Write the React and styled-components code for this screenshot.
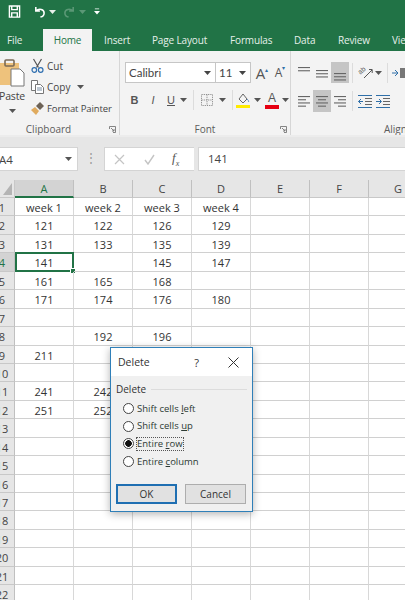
import styled, { createGlobalStyle } from "styled-components";

const GlobalStyle = createGlobalStyle`
  html, body { margin: 0; padding: 0; background: #fff; }
`;

const columns = ["A", "B", "C", "D", "E", "F", "G"];
const rows = [
  ["week 1", "week 2", "week 3", "week 4"],
  ["121", "122", "126", "129"],
  ["131", "133", "135", "139"],
  ["141", "", "145", "147"],
  ["161", "165", "168", ""],
  ["171", "174", "176", "180"],
  [],
  ["", "192", "196", ""],
  ["211"],
  [],
  ["241", "242"],
  ["251", "252"],
  [], [], [], [], [], [], [], [], [], [],
];
const tabs = [
  { name: "File", width: 36 },
  { name: "Home", width: 49, active: true },
  { name: "Insert", width: 48, gap: 12 },
  { name: "Page Layout", width: 78 },
  { name: "Formulas", width: 64 },
  { name: "Data", width: 44 },
  { name: "Review", width: 54 },
  { name: "View", width: 30 },
];
const radios = [
  { before: "Shift cells ", key: "l", after: "eft" },
  { before: "Shift cells ", key: "u", after: "p" },
  { before: "Entire ", key: "r", after: "ow", checked: true },
  { before: "Entire ", key: "c", after: "olumn" },
];

const Caret = ({ color = "#555" }) => (
  <svg width="7" height="4" viewBox="0 0 7 4"><path d="M0 0h7L3.5 4z" fill={color} /></svg>
);

const Lines = ({ widths, top = 1.5, color = "#666" }) => (
  <svg width="14" height="16" viewBox="0 0 14 16">
    {widths.map(([x, w], i) => (
      <rect key={i} x={x} y={top + i * 3.2} width={w} height="1.1" fill={color} />
    ))}
  </svg>
);

const Launcher = () => (
  <svg width="7" height="7" viewBox="0 0 7 7" fill="none" stroke="#777" strokeWidth="0.9">
    <path d="M.5 3V.5H6.5V6.5H4" />
    <path d="M2 2l3 3M5 3v2H3" />
  </svg>
);

const App = () => (
  <Page>
    <GlobalStyle />
    <Quick>
      <svg width="13" height="13" viewBox="0 0 13 14" fill="none" stroke="#fff" strokeWidth="1.5">
        <path d="M1 1h11v12H1zM3.5 1v4h6V1M3.5 13V8.5h6V13" />
      </svg>
      <svg width="13" height="12" viewBox="0 0 14 13" fill="none" stroke="#fff" strokeWidth="1.7">
        <path d="M3 1v4.5h4.5M3.3 5.2C6.5 2.2 12 3.6 12 7.5c0 2.4-1.8 4-4 4.5" />
      </svg>
      <Caret color="#e8f0ea" />
      <svg width="13" height="12" viewBox="0 0 14 13" fill="none" stroke="#5b9876" strokeWidth="1.7">
        <path d="M11 1v4.5H6.5M10.7 5.2C7.5 2.2 2 3.6 2 7.5c0 2.4 1.8 4 4 4.5" />
      </svg>
      <Caret color="#5b9876" />
      <svg width="6" height="7" viewBox="0 0 7 7"><path d="M1 0h5v1H1zM0 3h7L3.5 7z" fill="#fff" /></svg>
    </Quick>

    <TabBar>
      {tabs.map((tab) => (
        <Tab key={tab.name} $active={tab.active} $width={tab.width} $gap={tab.gap}>{tab.name}</Tab>
      ))}
    </TabBar>

    <Ribbon>
      <Group $width={142} $offset={-22}>
        <GroupBody $pad="8px 0 0 22px">
          <PasteColumn>
            <svg width="27" height="28" viewBox="0 0 27 28">
              <rect x="0" y="4" width="20" height="22" fill="#eec27c" />
              <rect x="6" y="1" width="9" height="6" rx="1" fill="none" stroke="#7a6a55" strokeWidth="1.6" />
              <path d="M12 10h9l4 4v13H12z" fill="#fff" stroke="#777" />
            </svg>
            <PasteLabel>Paste</PasteLabel>
            <Caret />
          </PasteColumn>
          <ClipList>
            <ClipItem>
              <svg width="13" height="15" viewBox="0 0 13 15" fill="none">
                <path d="M2.5 1l5 8.5M10.5 1l-5 8.5" stroke="#555" strokeWidth="1.2" />
                <circle cx="3.3" cy="12" r="2.3" stroke="#2f6fb0" strokeWidth="1.2" />
                <circle cx="9.7" cy="12" r="2.3" stroke="#2f6fb0" strokeWidth="1.2" />
              </svg>
              <span>Cut</span>
            </ClipItem>
            <ClipItem>
              <svg width="13" height="14" viewBox="0 0 13 14" fill="#fff" stroke="#777">
                <path d="M.5.5h6v10h-6z" />
                <path d="M4.5 4.5h5l3 3v6h-8z" />
                <path d="M6 8h5M6 10h5" stroke="#7a8fa5" />
              </svg>
              <span>Copy</span>
              <CopyCaret><Caret /></CopyCaret>
            </ClipItem>
            <ClipItem>
              <svg width="13" height="13" viewBox="0 0 13 13">
                <path d="M0 8l4-3 4 4-3 4z" fill="#e0ab5e" />
                <path d="M5 4l4-4 4 4-4 4z" fill="#6d6256" />
              </svg>
              <PainterText>Format Painter</PainterText>
            </ClipItem>
          </ClipList>
        </GroupBody>
        <GroupLabel>Clipboard<LauncherSlot><Launcher /></LauncherSlot></GroupLabel>
      </Group>

      <Group $width={171}>
        <GroupBody $column $pad="11px 0 0 5px">
          <ToolRow>
            <Combo $width={91}>Calibri<Caret color="#444" /></Combo>
            <Combo $width={36}>11<Caret color="#444" /></Combo>
            <GrowFont $size={15}>A<sup>▴</sup></GrowFont>
            <GrowFont $size={12}>A<sup>▾</sup></GrowFont>
          </ToolRow>
          <FormatRow>
            <FormatKey $width={19}><b>B</b></FormatKey>
            <FormatKey $width={18}><i>I</i></FormatKey>
            <FormatKey $width={18}><u>U</u></FormatKey>
            <Caret />
            <Rule $left={6} />
            <BorderIcon width="12" height="12" viewBox="0 0 12 12" fill="none" stroke="#8d8d8d" strokeDasharray="1.2 1">
              <path d="M.5.5h11v11H.5zM6 .5v11M.5 6h11" />
            </BorderIcon>
            <SmallGap $width={6} /><Caret />
            <Rule $left={6} />
            <SmallGap $width={3} />
            <svg width="15" height="16" viewBox="0 0 15 16">
              <path d="M3 7l4-5 4 5-4 4z" fill="#f4f4f4" stroke="#666" />
              <path d="M11 7c1 1 2 2 1.5 3" stroke="#5a87c0" fill="none" />
              <rect x="0" y="13" width="14" height="3" fill="#ffeb00" />
            </svg>
            <SmallGap $width={3} /><Caret />
            <SmallGap $width={4} />
            <FontColor>
              <span>A</span>
              <i />
            </FontColor>
            <SmallGap $width={3} /><Caret />
          </FormatRow>
        </GroupBody>
        <GroupLabel>Font<LauncherSlot><Launcher /></LauncherSlot></GroupLabel>
      </Group>

      <Group $width={130} $open>
        <GroupBody $column $pad="11px 0 0 4px">
          <ToolRow>
            <AlignKey><Lines widths={[[1, 12], [1, 12]]} top={2} /></AlignKey>
            <AlignKey><Lines widths={[[1, 12], [1, 12], [1, 12]]} top={5} /></AlignKey>
            <AlignKey $on><Lines widths={[[1, 12], [1, 12], [1, 12]]} top={8} /></AlignKey>
            <Rule $left={3} />
            <SmallGap $width={3} />
            <AlignKey $wide>
              <svg width="15" height="15" viewBox="0 0 15 15" fill="none" stroke="#555">
                <text x="1" y="8" fontSize="7" fontFamily="Liberation Sans" fill="#555" stroke="none" transform="rotate(-40 4 7)">ab</text>
                <path d="M6 13l8-8" />
                <path d="M11 4.5h3.2V8" />
              </svg>
              <Caret />
            </AlignKey>
            <Rule $left={3} />
            <SmallGap $width={4} />
            <svg width="14" height="10" viewBox="0 0 14 10">
              <path d="M0 5h5M3 2l3 3-3 3" stroke="#2f6fa8" fill="none" />
              <rect x="8" y="0" width="6" height="10" fill="#777" />
            </svg>
          </ToolRow>
          <ToolRow $top={7}>
            <AlignKey $tall><Lines widths={[[1, 12], [1, 8], [1, 12], [1, 8]]} top={3} /></AlignKey>
            <AlignKey $tall $on><Lines widths={[[1, 12], [3, 8], [1, 12], [3, 8]]} top={3} /></AlignKey>
            <AlignKey $tall><Lines widths={[[1, 12], [5, 8], [1, 12], [5, 8]]} top={3} /></AlignKey>
            <Rule $left={3} />
            <SmallGap $width={3} />
            <AlignKey $tall>
              <svg width="14" height="13" viewBox="0 0 14 13" fill="none" stroke="#2f6fa8">
                <path d="M5 6.5H0.5M3 4L.5 6.5 3 9M0 .5h14M0 12.5h14" />
                <path d="M7 3.5h7M7 6.5h7M7 9.5h7" stroke="#666" />
              </svg>
            </AlignKey>
            <AlignKey $tall>
              <svg width="14" height="13" viewBox="0 0 14 13" fill="none" stroke="#2f6fa8">
                <path d="M0 6.5h5M3 4l2.5 2.5L3 9M0 .5h14M0 12.5h14" />
                <path d="M7 3.5h7M7 6.5h7M7 9.5h7" stroke="#666" />
              </svg>
            </AlignKey>
          </ToolRow>
        </GroupBody>
        <GroupLabel $start={93}>Alignment</GroupLabel>
      </Group>
    </Ribbon>

    <FormulaBar>
      <NameBox>
        <span>A4</span>
        <Caret />
      </NameBox>
      <Dots>⋮</Dots>
      <FxBox>
        <svg width="11" height="11" viewBox="0 0 11 11" fill="none" stroke="#c4c4c4" strokeWidth="1.2">
          <path d="M1 1l9 9M10 1l-9 9" />
        </svg>
        <svg width="11" height="11" viewBox="0 0 11 11" fill="none" stroke="#c4c4c4" strokeWidth="1.4">
          <path d="M1 6l3 4 6-9" />
        </svg>
        <FxMark>f<sub>x</sub></FxMark>
      </FxBox>
      <FormulaInput>141</FormulaInput>
    </FormulaBar>

    <Sheet>
      <Corner>
        <svg width="9" height="12" viewBox="0 0 9 12"><path d="M9 0v12H0z" fill="#b4b4b4" /></svg>
      </Corner>
      {columns.map((name) => (
        <ColHead key={name} $selected={name === "A"}>{name}</ColHead>
      ))}
      {rows.map((row, r) => [
        <RowHead key={`h${r}`} $selected={r === 3}><span>{r + 1}</span></RowHead>,
        ...columns.map((name, c) => (
          <Cell key={name + r} $selected={r === 3 && c === 0}>{row[c]}</Cell>
        )),
      ])}
    </Sheet>

    <Dialog>
      <DialogTitle>
        <span>Delete</span>
        <Help>?</Help>
        <svg width="11" height="11" viewBox="0 0 11 11" fill="none" stroke="#333" strokeWidth="1">
          <path d="M.5.5l10 10M10.5.5l-10 10" />
        </svg>
      </DialogTitle>
      <DialogBody>
        <Legend><span>Delete</span><i /></Legend>
        <RadioList>
          {radios.map((item) => (
            <RadioRow key={item.key}>
              <RadioDot $checked={item.checked} />
              <RadioText $focus={item.checked}>
                {item.before}<u>{item.key}</u>{item.after}
              </RadioText>
            </RadioRow>
          ))}
        </RadioList>
        <ButtonRow>
          <DialogButton $primary>OK</DialogButton>
          <DialogButton>Cancel</DialogButton>
        </ButtonRow>
      </DialogBody>
    </Dialog>
  </Page>
);

export default App;

const Page = styled.div`
  position: relative;
  width: 405px;
  height: 600px;
  overflow: hidden;
  font-family: "Open Sans", "Liberation Sans", sans-serif;
  color: #444;
`;

const Quick = styled.div`
  height: 29px;
  background: #217346;
  display: flex;
  align-items: center;
  padding: 0 0 6px 8px;
  box-sizing: border-box;
  svg:nth-child(2) { margin-left: 12px; }
  svg:nth-child(3) { margin-left: 3px; }
  svg:nth-child(4) { margin-left: 7px; }
  svg:nth-child(5) { margin-left: 3px; }
  svg:nth-child(6) { margin-left: 8px; }
`;

const TabBar = styled.div`
  height: 22px;
  background: #217346;
  display: flex;
  padding-left: 7px;
  white-space: nowrap;
`;

const Tab = styled.div`
  flex: none;
  box-sizing: border-box;
  width: ${(p) => p.$width}px;
  margin-left: ${(p) => p.$gap || 0}px;
  font-size: 10px;
  letter-spacing: -0.15px;
  line-height: 23px;
  color: ${(p) => (p.$active ? "#217346" : "#e6f0ea")};
  text-align: ${(p) => (p.$active ? "center" : "left")};
  background: ${(p) => (p.$active ? "#f3f3f3" : "transparent")};
`;

const Ribbon = styled.div`
  height: 84px;
  background: #f3f3f3;
  display: flex;
  overflow: hidden;
`;

const Group = styled.div`
  flex: none;
  box-sizing: border-box;
  width: ${(p) => p.$width}px;
  margin-left: ${(p) => p.$offset || 0}px;
  display: flex;
  flex-direction: column;
  border-right: ${(p) => (p.$open ? "none" : "1px solid #d6d6d6")};
`;

const GroupBody = styled.div`
  box-sizing: border-box;
  height: 70px;
  flex: none;
  display: flex;
  flex-direction: ${(p) => (p.$column ? "column" : "row")};
  padding: ${(p) => p.$pad};
`;

const GroupLabel = styled.div`
  position: relative;
  height: 14px;
  line-height: 17px;
  font-size: 10px;
  color: #5c5c5c;
  white-space: nowrap;
  box-sizing: border-box;
  text-align: ${(p) => (p.$start ? "left" : "center")};
  padding-left: ${(p) => p.$start || 0}px;
`;

const LauncherSlot = styled.span`
  position: absolute;
  right: 3px;
  top: 5px;
  display: flex;
`;

const PasteColumn = styled.div`
  width: 26px;
  display: flex;
  flex-direction: column;
  align-items: center;
  margin-left: -1px;
`;

const PasteLabel = styled.div`
  font-size: 10.5px;
  line-height: 14px;
  margin: 2px 0 6px;
  color: #444;
  letter-spacing: -0.2px;
`;

const ClipList = styled.div`
  display: flex;
  flex-direction: column;
  margin: -4px 0 0 6px;
`;

const ClipItem = styled.div`
  height: 21.5px;
  display: flex;
  align-items: center;
  gap: 3px;
  font-size: 10px;
  white-space: nowrap;
  svg { flex: none; }
`;

const PainterText = styled.span`
  font-size: 9.5px;
  letter-spacing: -0.1px;
`;

const CopyCaret = styled.span`
  display: flex;
  margin-left: 4px;
`;

const ToolRow = styled.div`
  display: flex;
  align-items: center;
  margin-top: ${(p) => p.$top || 0}px;
`;

const Combo = styled.div`
  box-sizing: border-box;
  width: ${(p) => p.$width}px;
  height: 21px;
  background: #fff;
  border: 1px solid #c6c6c6;
  margin-right: -1px;
  padding: 0 4px 0 3px;
  display: flex;
  align-items: center;
  justify-content: space-between;
  font-family: "Lato", "Liberation Sans", sans-serif;
  font-size: 11.5px;
  color: #444;
`;

const GrowFont = styled.div`
  width: 18px;
  margin-left: ${(p) => (p.$size > 12 ? 3 : 0)}px;
  text-align: center;
  font-size: ${(p) => p.$size}px;
  color: #555;
  line-height: 20px;
  sup { font-size: 6px; color: #2f6fa8; vertical-align: 7px; line-height: 0; }
`;

const FormatRow = styled.div`
  display: flex;
  align-items: center;
  margin-top: 7px;
  height: 20px;
`;

const FormatKey = styled.div`
  width: ${(p) => p.$width}px;
  text-align: center;
  font-size: 11px;
  color: #555;
  font-family: "Liberation Sans", sans-serif;
`;

const BorderIcon = styled.svg`
  margin-left: 7px;
`;

const Rule = styled.div`
  flex: none;
  width: 1px;
  height: 20px;
  background: #dcdcdc;
  margin-left: ${(p) => p.$left}px;
`;

const SmallGap = styled.span`
  flex: none;
  width: ${(p) => p.$width}px;
`;

const FontColor = styled.div`
  width: 14px;
  text-align: center;
  font-size: 12px;
  line-height: 12px;
  color: #555;
  font-family: "Liberation Sans", sans-serif;
  i { display: block; height: 4px; background: #e60012; margin-top: 1px; }
`;

const AlignKey = styled.div`
  flex: none;
  width: ${(p) => (p.$wide ? 28 : 18)}px;
  height: ${(p) => (p.$tall ? 22 : 21)}px;
  display: flex;
  align-items: center;
  justify-content: ${(p) => (p.$wide ? "flex-start" : "center")};
  padding-left: ${(p) => (p.$wide ? 2 : 0)}px;
  box-sizing: border-box;
  gap: 2px;
  background: ${(p) => (p.$on ? "#c5c5c5" : "transparent")};
`;

const FormulaBar = styled.div`
  height: 45px;
  box-sizing: border-box;
  background: #e6e6e6;
  border-top: 2px solid #ececec;
  padding-top: 10px;
  display: flex;
  align-items: flex-start;
`;

const NameBox = styled.div`
  box-sizing: border-box;
  width: 79px;
  height: 24px;
  background: #fff;
  border: 1px solid #d4d4d4;
  border-left: none;
  display: flex;
  align-items: center;
  justify-content: space-between;
  padding-right: 5px;
  font-size: 11.5px;
  margin-left: -1px;
`;

const Dots = styled.div`
  width: 26px;
  text-align: center;
  font-size: 12px;
  line-height: 22px;
  color: #999;
`;

const FxBox = styled.div`
  box-sizing: border-box;
  width: 90px;
  height: 24px;
  background: #fff;
  border: 1px solid #d4d4d4;
  border-right: none;
  display: flex;
  align-items: center;
  gap: 19px;
  padding-left: 9px;
`;

const FxMark = styled.span`
  font-family: "Liberation Serif", serif;
  font-style: italic;
  font-size: 13px;
  margin-left: -2px;
  color: #555;
  sub { font-size: 8px; }
`;

const FormulaInput = styled.div`
  flex: 1;
  box-sizing: border-box;
  height: 24px;
  margin-left: 4px;
  background: #fff;
  border: 1px solid #d4d4d4;
  border-right: none;
  padding-left: 9px;
  font-size: 11.5px;
  line-height: 22px;
`;

const Sheet = styled.div`
  display: grid;
  grid-template-columns: 15px repeat(6, 59px) 59px;
  grid-template-rows: 18px;
  grid-auto-rows: 18.45px;
  background: #fff;
`;

const Corner = styled.div`
  background: #e6e6e6;
  border-right: 1px solid #c8c8c8;
  border-bottom: 1px solid #c8c8c8;
  box-sizing: border-box;
  display: flex;
  align-items: flex-end;
  justify-content: flex-end;
  padding: 0 2px 2px 0;
`;

const ColHead = styled.div`
  box-sizing: border-box;
  background: ${(p) => (p.$selected ? "#d3d3d3" : "#e6e6e6")};
  color: ${(p) => (p.$selected ? "#217346" : "#444")};
  border-right: 1px solid #c0c0c0;
  border-bottom: ${(p) => (p.$selected ? "2px solid #217346" : "1px solid #c8c8c8")};
  text-align: center;
  font-size: 11px;
  line-height: 18px;
`;

const RowHead = styled.div`
  box-sizing: border-box;
  overflow: hidden;
  background: ${(p) => (p.$selected ? "#d3d3d3" : "#e6e6e6")};
  color: ${(p) => (p.$selected ? "#217346" : "#444")};
  border-right: 1px solid #c0c0c0;
  border-bottom: 1px solid #c8c8c8;
  font-size: 11px;
  line-height: 19px;
  span {
    display: block;
    width: 26px;
    margin-left: -11px;
    text-align: center;
  }
`;

const Cell = styled.div`
  position: relative;
  box-sizing: border-box;
  border-right: 1px solid #d8d8d8;
  border-bottom: 1px solid #d0d0d0;
  text-align: center;
  font-size: 11px;
  line-height: 20px;
  color: #333;
  ${(p) => p.$selected && `
    &::before {
      content: "";
      position: absolute;
      inset: -1px -1px -1px 0;
      border: 2px solid #217346;
    }
    &::after {
      content: "";
      position: absolute;
      right: -3px;
      bottom: -3px;
      width: 4px;
      height: 4px;
      background: #217346;
      border: 1px solid #fff;
    }
  `}
`;

const Dialog = styled.div`
  position: absolute;
  left: 110px;
  top: 347px;
  width: 143px;
  height: 165px;
  box-sizing: border-box;
  border: 1px solid #2f7fb8;
  background: #f0f0f0;
  box-shadow: 0 2px 8px rgba(0, 0, 0, 0.3);
  display: flex;
  flex-direction: column;
`;

const DialogTitle = styled.div`
  height: 28px;
  flex: none;
  background: #fff;
  display: flex;
  align-items: center;
  padding: 0 13px 0 7px;
  font-size: 10.5px;
  color: #333;
  span { flex: 1; }
`;

const Help = styled.b`
  font-weight: 400;
  font-size: 11px;
  margin-right: 29px;
`;

const DialogBody = styled.div`
  flex: 1;
  padding: 6px 5px 7px;
  display: flex;
  flex-direction: column;
`;

const Legend = styled.div`
  display: flex;
  align-items: center;
  gap: 5px;
  font-size: 10px;
  line-height: 14px;
  color: #333;
  i { flex: 1; height: 1px; background: #dcdcdc; }
`;

const RadioList = styled.div`
  margin: 4px 0 0 7px;
  display: flex;
  flex-direction: column;
`;

const RadioRow = styled.div`
  height: 17.6px;
  display: flex;
  align-items: center;
  gap: 3px;
`;

const RadioDot = styled.span`
  box-sizing: border-box;
  flex: none;
  width: 11px;
  height: 11px;
  border-radius: 50%;
  border: 1px solid #444;
  background: ${(p) => (p.$checked ? "radial-gradient(circle, #111 0 3px, #fff 3.6px)" : "#fff")};
`;

const RadioText = styled.span`
  font-size: 9.5px;
  line-height: 12px;
  color: #2c3a34;
  white-space: nowrap;
  outline: ${(p) => (p.$focus ? "1px dotted #555" : "none")};
`;

const ButtonRow = styled.div`
  margin-top: auto;
  display: flex;
  gap: 8px;
`;

const DialogButton = styled.div`
  box-sizing: border-box;
  width: 61px;
  height: 20px;
  background: #e1e1e1;
  border: ${(p) => (p.$primary ? "2px solid #1f6fb2" : "1px solid #adadad")};
  text-align: center;
  font-size: 10px;
  line-height: ${(p) => (p.$primary ? 16 : 18)}px;
  color: #333;
`;
